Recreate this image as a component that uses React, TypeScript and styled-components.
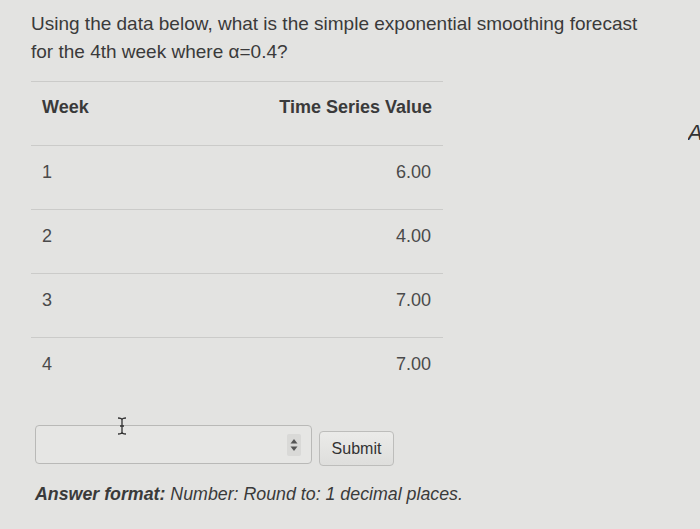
import React from "react";
import styled, { createGlobalStyle } from "styled-components";

const Global = createGlobalStyle`
  html, body { margin: 0; padding: 0; background: #e3e3e1; }
  body { font-family: "Liberation Sans", Arial, Helvetica, sans-serif; color: #3a3a3a; }
`;

const Page = styled.div`
  width: 700px;
  height: 529px;
  display: flex;
  overflow: hidden;
  background: #e3e3e1;
`;

const Main = styled.div`
  flex: 1;
  padding: 10px 0 0 31px;
  display: flex;
  flex-direction: column;
  position: relative;
`;

const Side = styled.div`
  width: 12px;
  padding-top: 120px;
  overflow: hidden;
  font-size: 22px;
  font-style: italic;
  color: #333;
`;

const Question = styled.p`
  margin: 0;
  font-size: 19px;
  line-height: 28px;
  color: #3a3a3a;
  width: 612px;
`;

const Table = styled.div`
  margin-top: 15px;
  width: 412px;
  display: flex;
  flex-direction: column;
  border-top: 1px solid #cbcbc9;
`;

const Row = styled.div<{ $head?: boolean }>`
  height: ${(p) => (p.$head ? 64 : 63)}px;
  display: flex;
  justify-content: space-between;
  align-items: flex-start;
  padding: ${(p) => (p.$head ? 14 : 15)}px 12px 0 11px;
  box-sizing: border-box;
  border-bottom: ${(p) => (p.$head ? "1px solid #cbcbc9" : "none")};
`;

const Divider = styled.div`
  height: 1px;
  background: #cbcbc9;
`;

const Cell = styled.span<{ $bold?: boolean }>`
  font-size: 18px;
  line-height: 22px;
  font-weight: ${(p) => (p.$bold ? 700 : 400)};
  color: ${(p) => (p.$bold ? "#3a3a3a" : "#4a4a4a")};
`;

const HeadValue = styled(Cell)`
  margin-right: -1px;
`;

const AnswerRow = styled.div`
  margin-top: 26px;
  margin-left: 4px;
  display: flex;
  align-items: center;
  gap: 7px;
`;

const InputBox = styled.div`
  width: 277px;
  height: 39px;
  box-sizing: border-box;
  border: 1px solid #b9b9b7;
  border-radius: 4px;
  background: #e6e6e4;
  display: flex;
  align-items: center;
  justify-content: flex-end;
  padding-right: 10px;
  margin-top: -4px;
`;

const Spinner = styled.div`
  width: 14px;
  height: 22px;
  background: #d9d9d7;
  border-radius: 2px;
  display: flex;
  align-items: center;
  justify-content: center;
`;

const SubmitButton = styled.button`
  width: 75px;
  height: 35px;
  border: 1px solid #bdbdbb;
  border-radius: 4px;
  background: linear-gradient(#ebebe9, #dededc);
  font-family: "Liberation Sans", Arial, sans-serif;
  font-size: 16px;
  color: #333;
  padding: 0;
  margin-top: 4px;
`;

const Format = styled.p`
  margin: 18px 0 0 4px;
  font-size: 17.8px;
  font-style: italic;
  color: #3a3a3a;
  b { font-weight: 700; }
`;

const Cursor = styled.svg`
  position: absolute;
  left: 117px;
  top: 417px;
`;

const rows = [
  ["1", "6.00"],
  ["2", "4.00"],
  ["3", "7.00"],
  ["4", "7.00"],
];

export default function App() {
  return (
    <Page>
      <Global />
      <Main>
        <Question>
          Using the data below, what is the simple exponential smoothing forecast
          for the 4th week where α=0.4?
        </Question>
        <Table>
          <Row $head>
            <Cell $bold>Week</Cell>
            <HeadValue $bold>Time Series Value</HeadValue>
          </Row>
          {rows.map(([w, v], i) => (
            <React.Fragment key={w}>
              {i > 0 && <Divider />}
              <Row>
                <Cell>{w}</Cell>
                <Cell>{v}</Cell>
              </Row>
            </React.Fragment>
          ))}
        </Table>
        <AnswerRow>
          <InputBox>
            <Spinner>
              <svg width="8" height="14" viewBox="0 0 8 14">
                <path d="M4 1 L7.5 5.5 H0.5 Z" fill="#555" />
                <path d="M4 13 L7.5 8.5 H0.5 Z" fill="#555" />
              </svg>
            </Spinner>
          </InputBox>
          <SubmitButton>Submit</SubmitButton>
        </AnswerRow>
        <Format>
          <b>Answer format:</b> Number: Round to: 1 decimal places.
        </Format>
        <Cursor width="10" height="18" viewBox="0 0 10 18">
          <path
            d="M1 1 Q5 1 5 3 Q5 1 9 1 M5 3 V15 M1 17 Q5 17 5 15 Q5 17 9 17 M3 9 H7"
            stroke="#333"
            strokeWidth="1.3"
            fill="none"
          />
        </Cursor>
      </Main>
      <Side>A</Side>
    </Page>
  );
}
